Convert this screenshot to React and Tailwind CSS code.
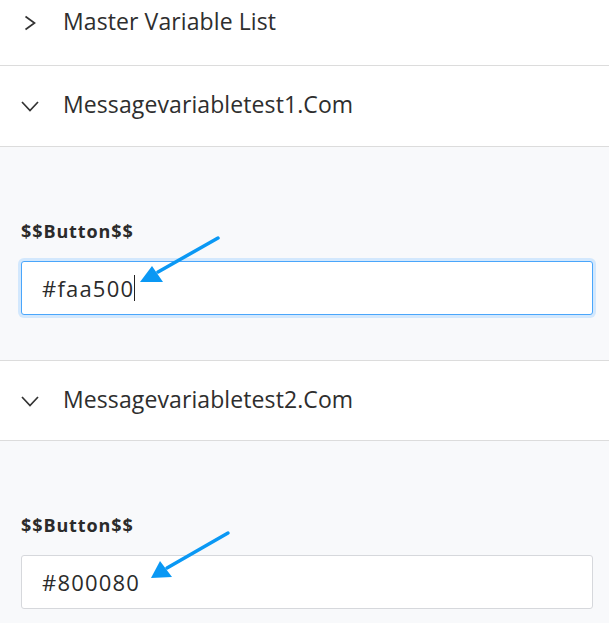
import React from "react";

const font = { fontFamily: '"Open Sans", "Lato", sans-serif' };

function ChevronRight() {
  return (
    <svg width="14" height="16" viewBox="0 0 14 16" fill="none" stroke="#333" strokeWidth="1.7">
      <path d="M2.5 1.5 L11.5 8 L2.5 14.5" />
    </svg>
  );
}

function ChevronDown() {
  return (
    <svg width="18" height="12" viewBox="0 0 18 12" fill="none" stroke="#333" strokeWidth="1.7">
      <path d="M1 2 L9 10.5 L17 2" />
    </svg>
  );
}

function Arrow({ x1, y1, x2, y2, h1, h2 }) {
  return (
    <svg className="absolute left-0 top-0 pointer-events-none" width="609" height="623">
      <line x1={x1} y1={y1} x2={x2} y2={y2} stroke="#0a98f4" strokeWidth="3.5" strokeLinecap="round" />
      <polygon points={`${h1} ${h2}`} fill="#0a98f4" />
    </svg>
  );
}

function Header({ open, title, className = "" }) {
  return (
    <div className={`flex items-center border-b border-[#dcdcdc] bg-white ${className}`}>
      <div className="w-[63px] flex justify-center pr-[3px]">
        {open ? <ChevronDown /> : <ChevronRight />}
      </div>
      <span className="text-[23px] leading-[28px] mb-[4px] text-[#2e2e2e] tracking-[0.1px]">{title}</span>
    </div>
  );
}

function Field({ value, focused }) {
  return (
    <div className="bg-[#f8f9fb] pl-[21px] pr-[16px] pt-[74px] pb-[45px]">
      <div className="text-[18px] font-bold text-[#2b2b2b] leading-[21px] tracking-[0.9px]">$$Button$$</div>
      <div
        className={`mt-[19px] h-[54px] flex items-center bg-white rounded-[3px] pl-[20px] border ${
          focused
            ? "border-[#4aa6fb] shadow-[0_0_0_3px_#d3e8fd]"
            : "border-[#d6d8dc]"
        }`}
      >
        <span className="text-[22px] text-[#2b2b2b] tracking-[1.2px]">{value}</span>
        {focused && <span className="w-[1px] h-[26px] bg-[#222]" />}
      </div>
    </div>
  );
}

export default function App() {
  return (
    <div className="relative w-[609px] h-[623px] overflow-hidden bg-white" style={font}>
      <Header title="Master Variable List" className="h-[66px] pb-[20px]" />
      <Header open title="Messagevariabletest1.Com" className="h-[81px]" />
      <Field value="#faa500" focused />
      <Header open title="Messagevariabletest2.Com" className="h-[81px] border-t" />
      <Field value="#800080" />
      <Arrow x1={218} y1={238} x2={158} y2={272} h1="140,282 152,266" h2="163,282" />
      <Arrow x1={228} y1={533} x2={167} y2={568} h1="151,578 160,561" h2="172,577" />
    </div>
  );
}
